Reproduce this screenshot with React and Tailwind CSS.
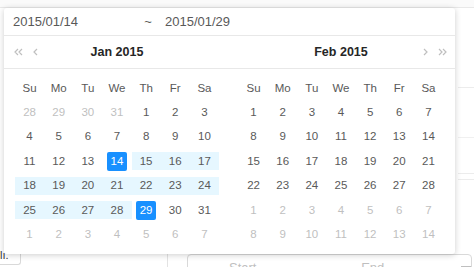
import React from 'react';

const jan = [
  [28, 29, 30, 31, 1, 2, 3],
  [4, 5, 6, 7, 8, 9, 10],
  [11, 12, 13, 14, 15, 16, 17],
  [18, 19, 20, 21, 22, 23, 24],
  [25, 26, 27, 28, 29, 30, 31],
  [1, 2, 3, 4, 5, 6, 7],
];

const feb = [
  [1, 2, 3, 4, 5, 6, 7],
  [8, 9, 10, 11, 12, 13, 14],
  [15, 16, 17, 18, 19, 20, 21],
  [22, 23, 24, 25, 26, 27, 28],
  [1, 2, 3, 4, 5, 6, 7],
  [8, 9, 10, 11, 12, 13, 14],
];

const weekDays = ['Su', 'Mo', 'Tu', 'We', 'Th', 'Fr', 'Sa'];

const DoubleLeft = () => (
  <svg width="9" height="8" viewBox="0 0 9 8" fill="none" stroke="#bfbfbf" strokeWidth="1.2">
    <path d="M4 1 L1 4 L4 7 M8 1 L5 4 L8 7" />
  </svg>
);
const SingleLeft = () => (
  <svg width="5" height="8" viewBox="0 0 5 8" fill="none" stroke="#bfbfbf" strokeWidth="1.2">
    <path d="M4 1 L1 4 L4 7" />
  </svg>
);
const SingleRight = () => (
  <svg width="5" height="8" viewBox="0 0 5 8" fill="none" stroke="#bfbfbf" strokeWidth="1.2">
    <path d="M1 1 L4 4 L1 7" />
  </svg>
);
const DoubleRight = () => (
  <svg width="9" height="8" viewBox="0 0 9 8" fill="none" stroke="#bfbfbf" strokeWidth="1.2">
    <path d="M1 1 L4 4 L1 7 M5 1 L8 4 L5 7" />
  </svg>
);

function Cell({ day, muted, selected, inRange }) {
  return (
    <div className="h-[24.4px] flex items-center justify-center">
      <div className={`w-full h-[18px] flex items-center justify-center ${inRange ? 'bg-[#e6f7ff]' : ''}`}>
        <span
          className={`w-[20px] h-[19px] flex items-center justify-center rounded-[2px] ${
            selected ? 'bg-[#1890ff] text-white' : muted ? 'text-[#bfbfbf]' : 'text-[#595959]'
          }`}
        >
          {day}
        </span>
      </div>
    </div>
  );
}

function Month({ rows, mutedFn, stateFn }) {
  return (
    <div className="w-[204px] text-[11.5px]">
      <div className="grid grid-cols-7 h-[24.5px] items-center text-[#595959]">
        {weekDays.map((w) => (
          <div key={w} className="text-center">{w}</div>
        ))}
      </div>
      <div className="grid grid-cols-7">
        {rows.map((row, r) =>
          row.map((d, c) => {
            const muted = mutedFn(r, d);
            const st = stateFn(r, d, muted);
            return (
              <Cell
                key={`${r}-${c}`}
                day={d}
                muted={muted}
                selected={st === 'sel'}
                inRange={st === 'range'}
              />
            );
          })
        )}
      </div>
    </div>
  );
}

export default function App() {
  const janMuted = (r, d) => (r === 0 && d > 20) || (r === 5);
  const janState = (r, d, muted) => {
    if (muted) return null;
    if (d === 14 || d === 29) return 'sel';
    if (d > 14 && d < 29) return 'range';
    return null;
  };
  const febMuted = (r) => r >= 4;
  const febState = () => null;

  return (
    <div className="relative w-[474px] h-[267px] bg-white overflow-hidden font-['Liberation_Sans',Arial,sans-serif]">
      {/* page behind the popup */}
      <div className="h-[8px] bg-[#fafafa] border-b border-[#e8e8e8]" />
      <div className="absolute left-[458px] right-0 top-[87px] border-t border-[#ececec]" />
      <div className="absolute left-[458px] right-0 top-[137px] border-t border-[#f0f0f0]" />
      <div className="absolute left-[458px] right-0 top-[173px] h-[7px] border-y border-[#ececec]" />
      <div className="absolute left-0 top-[240px] w-[21px] h-[25px] border-r border-b border-[#d9d9d9] rounded-br-[3px] text-[11px] text-[#333] leading-none pt-[10px]">lı.</div>
      <div className="absolute left-[167px] top-[250px] h-[20px] border-l border-[#e3e3e3]" />
      <div className="absolute left-[187px] top-[254px] w-[285px] h-[20px] border border-[#d9d9d9] rounded-[4px] flex items-start pt-[5px] text-[13px] leading-[16px] text-[#bfbfbf]">
        <span className="ml-[41px]">Start Time</span>
        <span className="ml-[73px]">End Time</span>
        <svg className="ml-[45px] mt-[5px]" width="10" height="10" viewBox="0 0 10 10" fill="none" stroke="#bfbfbf">
          <rect x="0.5" y="1.5" width="9" height="8" />
          <path d="M0.5 4 H9.5" />
        </svg>
      </div>

      {/* range picker popup */}
      <div className="absolute left-[4px] top-[8px] w-[451px] h-[246px] bg-white rounded-[3px] shadow-[0_1px_6px_rgba(0,0,0,0.2)]">
        <div className="h-[28px] border-b border-[#e8e8e8] flex items-center pl-[9px] text-[13px] text-[#595959]">
          <span className="w-[126px]">2015/01/14</span>
          <span className="w-[18px] text-center">~</span>
          <span className="ml-[8px]">2015/01/29</span>
        </div>
        <div className="h-[33px] border-b border-[#e8e8e8] flex items-center pl-[11px] gap-[20px]">
          <div className="w-[204px] relative flex items-center justify-center">
            <div className="absolute left-[-1px] flex items-center gap-[10px]">
              <DoubleLeft />
              <SingleLeft />
            </div>
            <span className="text-[12.5px] font-semibold text-[#262626]">Jan 2015</span>
          </div>
          <div className="w-[204px] relative flex items-center justify-center">
            <span className="text-[12.5px] font-semibold text-[#262626]">Feb 2015</span>
            <div className="absolute right-[-4px] flex items-center gap-[10px]">
              <SingleRight />
              <DoubleRight />
            </div>
          </div>
        </div>
        <div className="flex pl-[11px] gap-[20px] pt-[7px]">
          <Month rows={jan} mutedFn={janMuted} stateFn={janState} />
          <Month rows={feb} mutedFn={febMuted} stateFn={febState} />
        </div>
      </div>
    </div>
  );
}
